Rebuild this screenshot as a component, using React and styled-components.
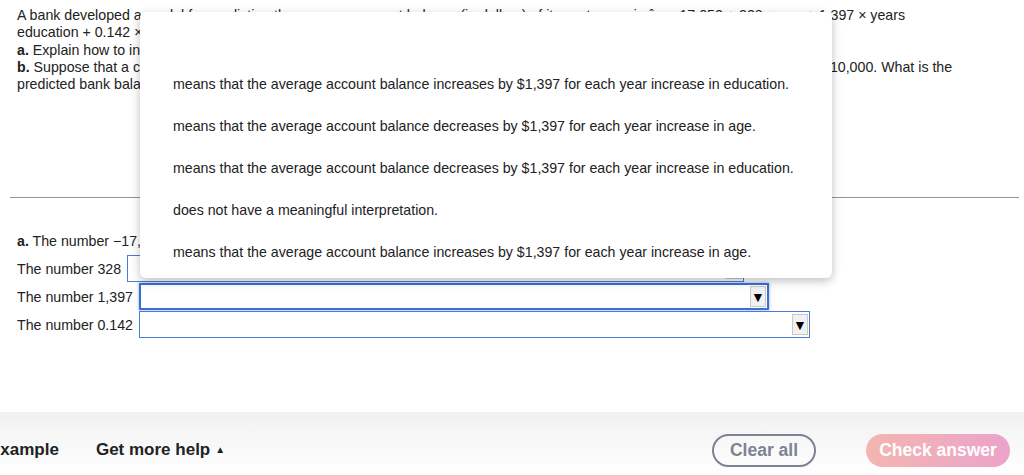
import React from "react";
import styled, { createGlobalStyle } from "styled-components";

const GlobalStyle = createGlobalStyle`
  html, body { margin: 0; padding: 0; background: #fff; }
  body { font-family: "Liberation Sans", Arial, sans-serif; color: #222; }
`;

const Page = styled.div`
  position: relative;
  height: 475px;
  display: flex;
  flex-direction: column;
  overflow: hidden;
`;

const Question = styled.div`
  padding: 7px 17px 0;
  font-size: 14.2px;
  line-height: 17.25px;
  white-space: nowrap;
`;

const Divider = styled.div`
  height: 1px;
  background: #8d94a8;
  margin: 104px 5px 0 10px;
`;

const Answers = styled.div`
  padding: 29px 0 0 17px;
  font-size: 14.2px;
`;

const Row = styled.div`
  display: flex;
  align-items: center;
  height: 27px;
  margin-bottom: 1px;
`;

const Select = styled.div`
  box-sizing: border-box;
  width: ${({ $w }) => $w}px;
  height: 27px;
  margin-left: 6px;
  display: flex;
  align-items: center;
  justify-content: flex-end;
  padding-right: 1px;
  background: #fff;
  border: ${({ $focus }) => ($focus ? "2px solid #3b6fd4" : "1px solid #4a7bd8")};
  box-shadow: ${({ $focus }) => ($focus ? "0 0 3px rgba(59,111,212,0.6)" : "none")};
`;

const Arrow = styled.span`
  box-sizing: border-box;
  width: 16px;
  height: 21px;
  display: flex;
  align-items: center;
  justify-content: center;
  background: #f1f1f1;
  border: 1px solid #c9c9c9;
  font-size: 14px;
  color: #000;
`;

const Menu = styled.div`
  position: absolute;
  left: 140px;
  top: 12px;
  width: 692px;
  box-sizing: border-box;
  padding: 9px 0 5px;
  background: #fff;
  border-radius: 6px;
  box-shadow: 0 3px 10px rgba(0, 0, 0, 0.25);
  z-index: 5;
`;

const Option = styled.div`
  height: 42px;
  display: flex;
  align-items: center;
  padding-left: 33px;
  font-size: 14.2px;
  color: #222;
`;

const Footer = styled.div`
  margin-top: auto;
  height: 63px;
  box-sizing: border-box;
  padding-top: 13px;
  display: flex;
  align-items: center;
  background: linear-gradient(#f1f1f1, #fff);
  font-weight: bold;
  font-size: 17px;
`;

const FooterLink = styled.span`
  margin-left: ${({ $ml }) => $ml}px;
  color: #222;
  white-space: nowrap;
`;

const Caret = styled.span`
  font-size: 10px;
  margin-left: 5px;
  vertical-align: 2px;
`;

const Buttons = styled.div`
  margin-left: auto;
  display: flex;
  gap: 50px;
  padding-right: 14px;
`;

const PillButton = styled.button`
  box-sizing: border-box;
  height: 33px;
  width: ${({ $w }) => $w}px;
  border-radius: 17px;
  font-family: inherit;
  font-weight: bold;
  font-size: 17.5px;
  ${({ $primary }) =>
    $primary
      ? `border: none; color: #fff; background: linear-gradient(90deg, #f3b6b1, #eba3c9);`
      : `border: 2px solid #7c8394; color: #7c8394; background: transparent;`}
`;

const options = [
  "",
  "means that the average account balance increases by $1,397 for each year increase in education.",
  "means that the average account balance decreases by $1,397 for each year increase in age.",
  "means that the average account balance decreases by $1,397 for each year increase in education.",
  "does not have a meaningful interpretation.",
  "means that the average account balance increases by $1,397 for each year increase in age.",
];

const rows = [
  { label: <><b>a.</b> The number  −17,052</>, w: 600 },
  { label: "The number 328", w: 617 },
  { label: "The number 1,397", w: 630, focus: true },
  { label: "The number 0.142", w: 671 },
];

export default function App() {
  return (
    <Page>
      <GlobalStyle />
      <Question>
        A bank developed a model for predicting the average account balance (in dollars) of its customers is ŷ = −17,052 + 328 × age + 1,397 × years
        <br />
        education + 0.142 × income.
        <br />
        <b>a.</b> Explain how to interpret the numbers in the model.
        <br />
        <b>b.</b> Suppose that a customer of the bank is 42 years of age, has 16 years of education, and has an annual household income of $110,000. What is the
        <br />
        predicted bank balance for this customer?
      </Question>
      <Divider />
      <Answers>
        {rows.map((r, i) => (
          <Row key={i}>
            <span>{r.label}</span>
            <Select $w={r.w} $focus={r.focus}>
              <Arrow>▼</Arrow>
            </Select>
          </Row>
        ))}
      </Answers>
      <Menu>
        {options.map((o, i) => (
          <Option key={i}>{o}</Option>
        ))}
      </Menu>
      <Footer>
        <FooterLink $ml={-11}>Example</FooterLink>
        <FooterLink $ml={37}>
          Get more help<Caret>▲</Caret>
        </FooterLink>
        <Buttons>
          <PillButton $w={104}>Clear all</PillButton>
          <PillButton $w={144} $primary>Check answer</PillButton>
        </Buttons>
      </Footer>
    </Page>
  );
}
